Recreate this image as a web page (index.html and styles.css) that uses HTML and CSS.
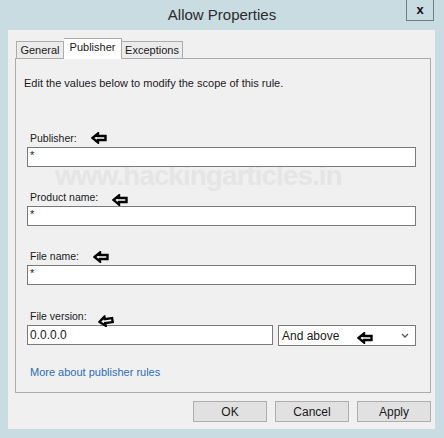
FILE: index.html
```html
<!DOCTYPE html>
<html lang="en">
<head>
  <meta charset="UTF-8">
  <title>Allow Properties</title>
  <link rel="stylesheet" href="styles.css">
</head>
<body>
  <div class="titlebar">
    <span></span>
    <span class="title">Allow Properties</span>
    <button class="close">x</button>
  </div>
  <div class="dialog">
    <div class="tabs">
      <div class="tab tab-general">General</div>
      <div class="tab tab-publisher active">Publisher</div>
      <div class="tab tab-exceptions">Exceptions</div>
    </div>
    <div class="panel">
      <p class="intro">Edit the values below to modify the scope of this rule.</p>

      <div class="field first">
        <div class="label">Publisher: <svg class="arrow arrow-publisher" viewBox="0 0 16 12"><polygon points="1.5,6 7,1.5 7,4 14.5,4 14.5,8 7,8 7,10.5"/></svg></div>
        <div class="input">*</div>
      </div>

      <div class="field">
        <div class="label">Product name: <svg class="arrow arrow-product" viewBox="0 0 16 12"><polygon points="1.5,6 7,1.5 7,4 14.5,4 14.5,8 7,8 7,10.5"/></svg></div>
        <div class="input">*</div>
      </div>

      <div class="field">
        <div class="label">File name: <svg class="arrow arrow-file" viewBox="0 0 16 12"><polygon points="1.5,6 7,1.5 7,4 14.5,4 14.5,8 7,8 7,10.5"/></svg></div>
        <div class="input">*</div>
      </div>

      <div class="field version">
        <div class="label">File version: <svg class="arrow arrow-version" viewBox="0 0 16 12"><polygon points="1.5,6 7,1.5 7,4 14.5,4 14.5,8 7,8 7,10.5"/></svg></div>
        <div class="version-row">
          <div class="input input-version">0.0.0.0</div>
          <div class="select">
            <span>And above</span>
            <svg class="arrow arrow-select" viewBox="0 0 16 12"><polygon points="1.5,6 7,1.5 7,4 14.5,4 14.5,8 7,8 7,10.5"/></svg>
            <svg class="chevron" viewBox="0 0 8 5"><polyline points="1,1 4,4 7,1"/></svg>
          </div>
        </div>
      </div>

      <a class="more">More about publisher rules</a>

      <div class="watermark">www.hackingarticles.in</div>
    </div>
    <div class="buttons">
      <button class="btn">OK</button>
      <button class="btn">Cancel</button>
      <button class="btn">Apply</button>
    </div>
  </div>
</body>
</html>
```

FILE: styles.css
```css
html,
body {
  height: 100%;
  overflow: hidden;
}

body {
  margin: 0;
  background: #c9dce1;
  font: 11px "Liberation Sans", Arial, sans-serif;
  color: #1a1a1a;
}

.titlebar {
  display: grid;
  grid-template-columns: 1fr auto 1fr;
  height: 30px;
}

.title {
  line-height: 30px;
  font-size: 15px;
  color: #2b2b2b;
}

.close {
  justify-self: end;
  margin-right: 10px;
  width: 28px;
  height: 21px;
  padding: 0;
  border: 1px solid #6f7d82;
  border-top: none;
  background: transparent;
  font: bold 13px "Liberation Sans", Arial, sans-serif;
  color: #111;
  line-height: 18px;
}

.dialog {
  box-sizing: border-box;
  height: 399px;
  margin: 0 9px 0 8px;
  padding: 8px 4px 0 7px;
  background: #f0f0f0;
}

.tabs {
  display: flex;
  align-items: flex-end;
  height: 21px;
  padding-left: 1px;
  margin-bottom: -1px;
  position: relative;
  z-index: 1;
}

.tab {
  box-sizing: border-box;
  height: 18px;
  line-height: 17px;
  border: 1px solid #acacac;
  background: #ebebeb;
  text-align: center;
  color: #1a1a1a;
}

.tab-general {
  width: 48px;
}

.tab-publisher {
  width: 58px;
}

.tab-exceptions {
  width: 62px;
  margin-left: -1px;
}

.tab.active {
  height: 21px;
  line-height: 17px;
  border-bottom: none;
  border-left: none;
  background: #fff;
}

.panel {
  box-sizing: border-box;
  height: 335px;
  border: 1px solid #acacac;
  background: #f0f0f0;
  padding: 0 14px 0 8px;
  position: relative;
}

.intro {
  margin: 17px 0 0;
  line-height: 14px;
}

.field {
  margin-top: 23px;
  padding-left: 3px;
  position: relative;
  z-index: 1;
}

.field.first {
  margin-top: 41px;
}

.field.version {
  margin-top: 24px;
}

.label {
  display: flex;
  align-items: center;
  height: 14px;
  line-height: 14px;
  padding-left: 3px;
  margin-bottom: 2px;
  font-size: 10.5px;
}

.arrow {
  width: 16px;
  height: 12px;
  margin-left: 14px;
  fill: #fff;
  stroke: #000;
  stroke-width: 2.4;
  stroke-linejoin: miter;
}

.arrow-product {
  margin-left: 14px;
  margin-top: 5px;
}

.arrow-file {
  margin-left: 14px;
  margin-top: 2px;
}

.arrow-version {
  margin-left: 11px;
  margin-top: 10px;
  transform: rotate(-8deg);
}

.input {
  box-sizing: border-box;
  height: 20px;
  border: 1px solid #7a7a7a;
  background: #fff;
  padding: 0 2px;
  line-height: 14px;
}

.version-row {
  display: flex;
  gap: 5px;
}

.input-version {
  width: 246px;
  line-height: 18px;
  font-size: 12px;
}

.select {
  box-sizing: border-box;
  display: flex;
  align-items: center;
  width: 138px;
  height: 21px;
  border: 1px solid #7a7a7a;
  background: #fff;
  padding: 0 6px 0 3px;
}

.select span {
  font-size: 12px;
}

.arrow-select {
  margin-left: 18px;
  margin-top: 4px;
}

.chevron {
  width: 8px;
  height: 5px;
  margin-left: auto;
  fill: none;
  stroke: #555;
  stroke-width: 1.3;
}

.more {
  display: block;
  margin-top: 19px;
  padding-left: 6px;
  line-height: 14px;
  font-size: 11px;
  color: #2a6ebb;
}

.watermark {
  position: absolute;
  left: 39px;
  top: 101px;
  font: bold 28px "Liberation Sans", Arial, sans-serif;
  color: #e5e5e5;
  letter-spacing: -1px;
  pointer-events: none;
}

.buttons {
  display: flex;
  justify-content: flex-end;
  gap: 8px;
  margin-top: 8px;
}

.btn {
  width: 74px;
  height: 21px;
  padding: 0;
  border: 1px solid #adadad;
  background: #e1e1e1;
  font: 12px "Liberation Sans", Arial, sans-serif;
  color: #1a1a1a;
}
```
